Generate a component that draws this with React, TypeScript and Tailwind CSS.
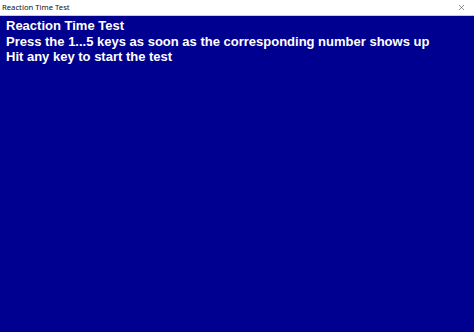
import { X } from "lucide-react";

export default function App() {
  return (
    <div className="w-[474px] h-[332px] flex flex-col bg-white overflow-hidden">
      <div className="h-[16px] flex items-center justify-between bg-white border-b border-[#c8cbe0]">
        <span className="pl-[2px] text-[7.7px] text-[#111] font-['Noto_Sans',sans-serif] leading-none">
          Reaction Time Test
        </span>
        <X size={9} strokeWidth={1.5} className="mr-[8px] text-[#444]" />
      </div>
      <div className="flex-1 bg-[#000090] px-[6px] pt-[2px] text-white font-bold text-[13px] leading-[15.5px] whitespace-nowrap font-['Liberation_Sans',Arial,sans-serif]">
        <p>Reaction Time Test</p>
        <p>Press the 1...5 keys as soon as the corresponding number shows up</p>
        <p>Hit any key to start the test</p>
      </div>
    </div>
  );
}
